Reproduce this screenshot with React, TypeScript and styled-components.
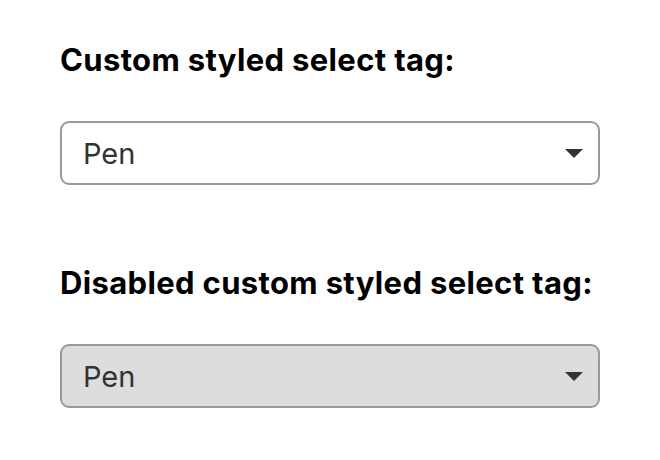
import React from "react";
import styled, { createGlobalStyle } from "styled-components";

const GlobalStyle = createGlobalStyle`
	body {
		margin: 0;
		background: #fff;
		font-family: Inter, "Liberation Sans", Arial, sans-serif;
	}
`;

const Page = styled.div`
	padding: 42px 60px 0 60px;
	width: 540px;
	display: flex;
	flex-direction: column;
	gap: 80px;
`;

const Field = styled.div`
	display: flex;
	flex-direction: column;
`;

const Label = styled.label`
	font-size: 31px;
	font-weight: 700;
	letter-spacing: 0.35px;
	color: #000;
	margin-bottom: 43px;
	line-height: 36px;
`;

const SelectWrap = styled.div`
	position: relative;
	width: 100%;
`;

const Select = styled.select`
	appearance: none;
	-webkit-appearance: none;
	display: block;
	width: 100%;
	height: 64px;
	padding: 0 48px 0 21px;
	font-family: Inter, "Liberation Sans", Arial, sans-serif;
	font-size: 29px;
	color: #333;
	background-color: #fff;
	border: 2px solid #999;
	border-radius: 9px;
	outline: none;

	&:disabled {
		background-color: #ddd;
		color: #333;
		opacity: 1;
	}
`;

const Arrow = styled.span`
	position: absolute;
	right: 17px;
	top: 50%;
	margin-top: -4px;
	width: 0;
	height: 0;
	border-left: 9px solid transparent;
	border-right: 9px solid transparent;
	border-top: 9px solid #333;
	pointer-events: none;
`;

const options = ["Pen", "Pencil", "Marker", "Crayon"];

const CustomSelect: React.FC<{ disabled?: boolean }> = ({ disabled }) => (
	<SelectWrap>
		<Select disabled={disabled} defaultValue="Pen">
			{options.map((o) => (
				<option key={o}>{o}</option>
			))}
		</Select>
		<Arrow />
	</SelectWrap>
);

export default function App() {
	return (
		<>
			<GlobalStyle />
			<Page>
				<Field>
					<Label>Custom styled select tag:</Label>
					<CustomSelect />
				</Field>
				<Field>
					<Label>Disabled custom styled select tag:</Label>
					<CustomSelect disabled />
				</Field>
			</Page>
		</>
	);
}
